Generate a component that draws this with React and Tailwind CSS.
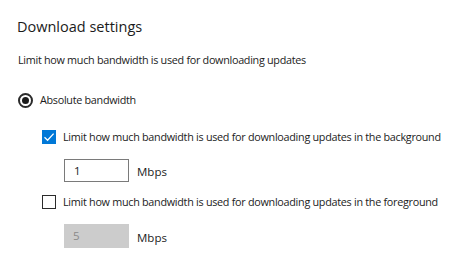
import React from "react";

const font = { fontFamily: '"Open Sans", "Noto Sans", sans-serif' };

function Check() {
  return (
    <div className="w-[14px] h-[14px] bg-[#0078d7] flex items-center justify-center shrink-0">
      <svg width="12" height="12" viewBox="0 0 12 12">
        <path d="M1.5 6.2 L4.6 9.2 L10.6 2.6" fill="none" stroke="#ffffff" strokeWidth="1.3" />
      </svg>
    </div>
  );
}

function Unchecked() {
  return <div className="w-[14px] h-[14px] border-[1.5px] border-[#2b2b2b] bg-white shrink-0" />;
}

export default function App() {
  return (
    <div className="w-[474px] h-[256px] bg-white text-[#1b1b1b] overflow-hidden flex flex-col pl-[17px] pt-[17px]" style={font}>
      <div className="h-[20px] leading-[20px] text-[14.5px] whitespace-nowrap">Download settings</div>
      <div className="mt-[15px] h-[16px] leading-[16px] text-[10.8px] tracking-[-0.29px] pl-[1px] whitespace-nowrap">
        Limit how much bandwidth is used for downloading updates
      </div>
      <div className="mt-[24px] h-[16px] flex items-center pl-[1px]">
        <div className="w-[15px] h-[15px] rounded-full border-2 border-[#2b2b2b] flex items-center justify-center shrink-0">
          <div className="w-[7px] h-[7px] rounded-full bg-[#1b1b1b]" />
        </div>
        <span className="ml-[7px] text-[10.8px] tracking-[-0.29px] leading-[16px] whitespace-nowrap">Absolute bandwidth</span>
      </div>
      <div className="mt-[21px] h-[15px] flex items-center pl-[25px]">
        <Check />
        <span className="ml-[7px] text-[10.8px] tracking-[-0.28px] leading-[16px] whitespace-nowrap">
          Limit how much bandwidth is used for downloading updates in the background
        </span>
      </div>
      <div className="mt-[15px] h-[23px] flex items-center pl-[47px]">
        <div className="w-[65px] h-[23px] border border-[#7a7a7a] flex items-center pl-[9px] text-[11.5px]">1</div>
        <span className="ml-[8px] text-[11.5px] mt-[3px]">Mbps</span>
      </div>
      <div className="mt-[12px] h-[15px] flex items-center pl-[25px]">
        <Unchecked />
        <span className="ml-[7px] text-[10.8px] tracking-[-0.28px] leading-[16px] whitespace-nowrap">
          Limit how much bandwidth is used for downloading updates in the foreground
        </span>
      </div>
      <div className="mt-[15px] h-[24px] flex items-center pl-[47px]">
        <div className="w-[65px] h-[24px] bg-[#cccccc] flex items-center pl-[9px] text-[11.5px] text-[#8a8a8a]">5</div>
        <span className="ml-[8px] text-[11.5px] mt-[3px]">Mbps</span>
      </div>
    </div>
  );
}
